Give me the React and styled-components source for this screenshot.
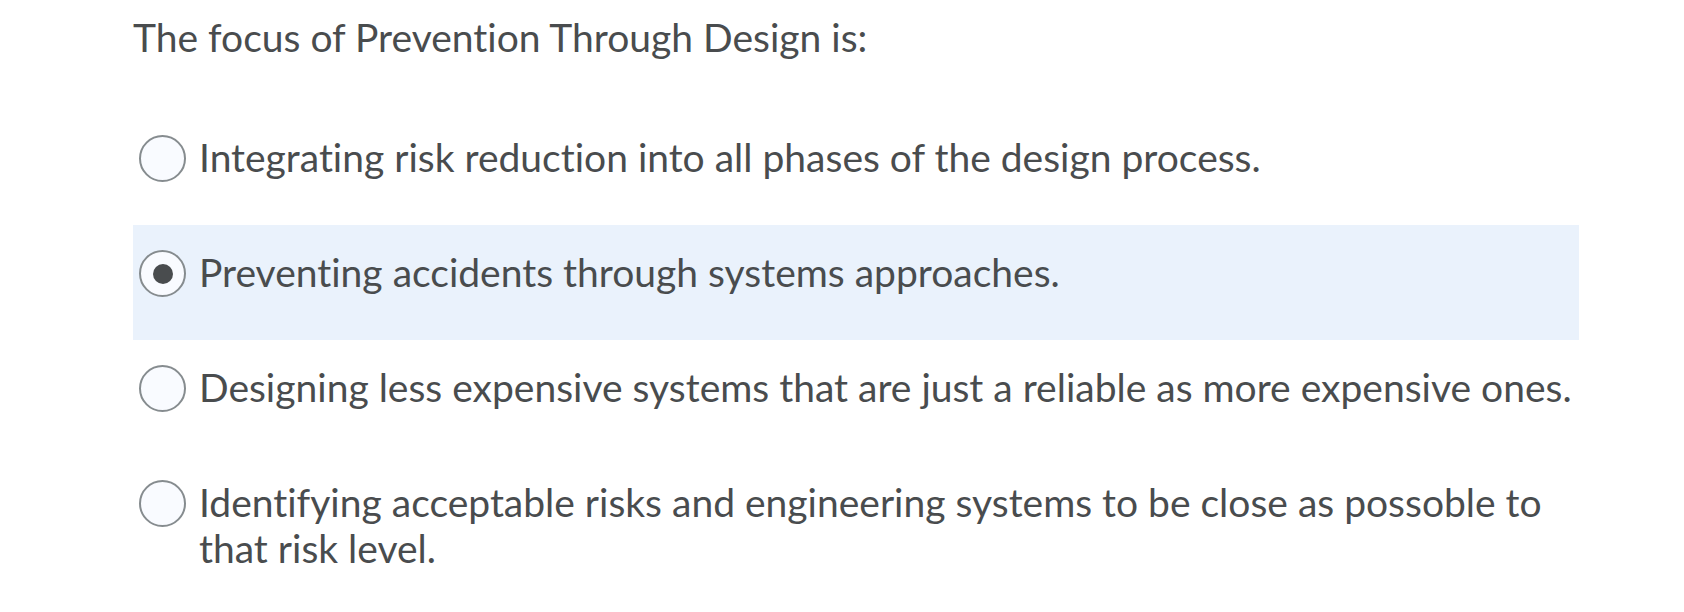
import React, { useState } from "react";
import styled, { createGlobalStyle } from "styled-components";

const GlobalStyle = createGlobalStyle`
  body {
    margin: 0;
    background: #ffffff;
    font-family: Lato, "Open Sans", sans-serif;
    font-variant-ligatures: none;
  }
`;

const options = [
  "Integrating risk reduction into all phases of the design process.",
  "Preventing accidents through systems approaches.",
  "Designing less expensive systems that are just a reliable as more expensive ones.",
  "Identifying acceptable risks and engineering systems to be close as possoble to that risk level.",
];

const App = () => {
  const [selected, setSelected] = useState(1);

  return (
    <>
      <GlobalStyle />
      <QuestionWrapper>
        <QuestionTitle>The focus of Prevention Through Design is:</QuestionTitle>
        <OptionList>
          {options.map((text, i) => (
            <OptionRow
              key={i}
              $active={selected === i}
              onClick={() => setSelected(i)}
            >
              <Radio $checked={selected === i} />
              <OptionText>{text}</OptionText>
            </OptionRow>
          ))}
        </OptionList>
      </QuestionWrapper>
    </>
  );
};

export default App;

const QuestionWrapper = styled.div`
  width: 1446px;
  margin-left: 133px;
  padding-top: 13px;
  color: #494c4e;
`;

const QuestionTitle = styled.div`
  font-size: 39px;
  line-height: 48px;
`;

const OptionList = styled.div`
  display: flex;
  flex-direction: column;
  margin-top: 49px;
`;

const OptionRow = styled.label`
  display: flex;
  align-items: flex-start;
  padding: 24px 0 43px 6px;
  background: ${(p) => (p.$active ? "#eaf2fc" : "transparent")};
  cursor: pointer;
`;

const Radio = styled.span`
  flex: none;
  box-sizing: border-box;
  width: 47px;
  height: 47px;
  margin-top: 1px;
  border: 2px solid #868c8f;
  border-radius: 50%;
  background: #f9fbff;
  display: flex;
  align-items: center;
  justify-content: center;

  &::after {
    content: "";
    display: ${(p) => (p.$checked ? "block" : "none")};
    width: 20px;
    height: 20px;
    border-radius: 50%;
    background: #494c4e;
  }
`;

const OptionText = styled.span`
  margin-left: 13px;
  font-size: 39px;
  line-height: 46px;
`;
